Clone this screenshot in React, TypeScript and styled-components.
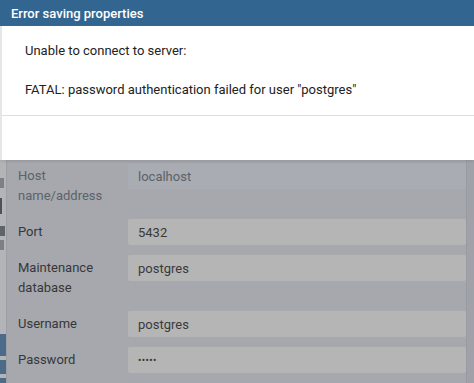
import React from 'react'
import styled, { createGlobalStyle } from 'styled-components'

const GlobalStyle = createGlobalStyle`
  html, body {
    margin: 0;
    padding: 0;
    background: #a5a7ab;
    font-family: Roboto, "Liberation Sans", sans-serif;
  }
`

const Screen = styled.div`
  width: 474px;
  height: 383px;
  overflow: hidden;
  display: flex;
  flex-direction: column;
  background: #a5a7ab;
`

const Dialog = styled.div`
  height: 160px;
  flex-shrink: 0;
  display: flex;
  flex-direction: column;
  background: #fff;
  border-left: 2px solid #e6e6e6;
  box-shadow: 0 1px 3px rgba(0, 0, 0, 0.12);
  position: relative;
  z-index: 1;
`

const DialogTitle = styled.div`
  height: 26px;
  margin-left: -2px;
  padding-left: 11px;
  display: flex;
  align-items: center;
  background: #326690;
  color: #fff;
  font-size: 13px;
  font-weight: 500;
`

const DialogBody = styled.div`
  height: 90px;
  padding: 16px 23px 0;
  box-sizing: border-box;
  border-bottom: 1px solid #dedede;
  color: #222;
  font-size: 13px;
`

const Message = styled.p`
  margin: 0 0 21px;
  line-height: 18px;
`

const DialogFooter = styled.div`
  flex: 1;
`

const Backdrop = styled.div`
  flex: 1;
  display: flex;
`

const SideStrip = styled.div`
  width: 7px;
  display: flex;
  flex-direction: column;
  background: #b3b4b7;
  border-right: 1px solid #9c9ea3;
  padding-top: 18px;
  gap: 4px;
  box-sizing: border-box;
`

const StripMark = styled.div<{ $h: number; $w?: number; $c?: string; $mt?: number }>`
  height: ${p => p.$h}px;
  width: ${p => p.$w ?? 5}px;
  margin-top: ${p => p.$mt ?? 0}px;
  background: ${p => p.$c ?? '#6f7378'};
`

const FormPanel = styled.div`
  flex: 1;
  display: flex;
  flex-direction: column;
  gap: 9px;
  padding: 2px 0 0 11px;
  background: #a6a8ad;
`

const Row = styled.div`
  display: grid;
  grid-template-columns: 110px 338px;
  align-items: start;
`

const Label = styled.label<{ $disabled?: boolean }>`
  padding: 4px 0 3px;
  font-size: 13px;
  line-height: 20px;
  color: ${p => (p.$disabled ? '#5c626b' : '#363739')};
`

const Input = styled.div<{ $disabled?: boolean }>`
  height: 27px;
  padding-left: 10px;
  display: flex;
  align-items: center;
  box-sizing: border-box;
  border-radius: 2px;
  background: ${p => (p.$disabled ? '#a9acb2' : '#b5b5b5')};
  border-top: 1px solid ${p => (p.$disabled ? '#a3a6ac' : '#a9a9a9')};
  color: ${p => (p.$disabled ? '#5c626b' : '#3a3a3a')};
  font-size: 13px;
`

const Dots = styled.span`
  font-size: 9px;
  letter-spacing: 0.5px;
  font-weight: 700;
`

const RightStrip = styled.div`
  width: 8px;
  background: #9fa2a8;
  border-left: 1px solid #989ba1;
`

const fields = [
  { label: 'Host name/address', value: 'localhost', disabled: true },
  { label: 'Port', value: '5432' },
  { label: 'Maintenance database', value: 'postgres' },
  { label: 'Username', value: 'postgres' },
]

export default function App() {
  return (
    <>
      <GlobalStyle />
      <Screen>
        <Dialog>
          <DialogTitle>Error saving properties</DialogTitle>
          <DialogBody>
            <Message>Unable to connect to server:</Message>
            <Message>FATAL: password authentication failed for user "postgres"</Message>
          </DialogBody>
          <DialogFooter />
        </Dialog>
        <Backdrop>
          <SideStrip>
            <StripMark $h={10} $w={4} $c="#7c8085" />
            <StripMark $h={16} $w={2} $c="#4d5258" $mt={6} />
            <StripMark $h={10} $w={5} $c="#5f646a" $mt={8} />
            <StripMark $h={10} $w={4} $c="#7c8085" />
            <StripMark $h={22} $w={6} $c="#4b6b88" $mt={80} />
            <StripMark $h={14} $w={6} $c="#4b6b88" />
            <StripMark $h={14} $w={6} $c="#4b6b88" />
          </SideStrip>
          <FormPanel>
            {fields.map(f => (
              <Row key={f.label}>
                <Label $disabled={f.disabled}>{f.label}</Label>
                <Input $disabled={f.disabled}>{f.value}</Input>
              </Row>
            ))}
            <Row>
              <Label>Password</Label>
              <Input>
                <Dots>•••••</Dots>
              </Input>
            </Row>
          </FormPanel>
          <RightStrip />
        </Backdrop>
      </Screen>
    </>
  )
}
